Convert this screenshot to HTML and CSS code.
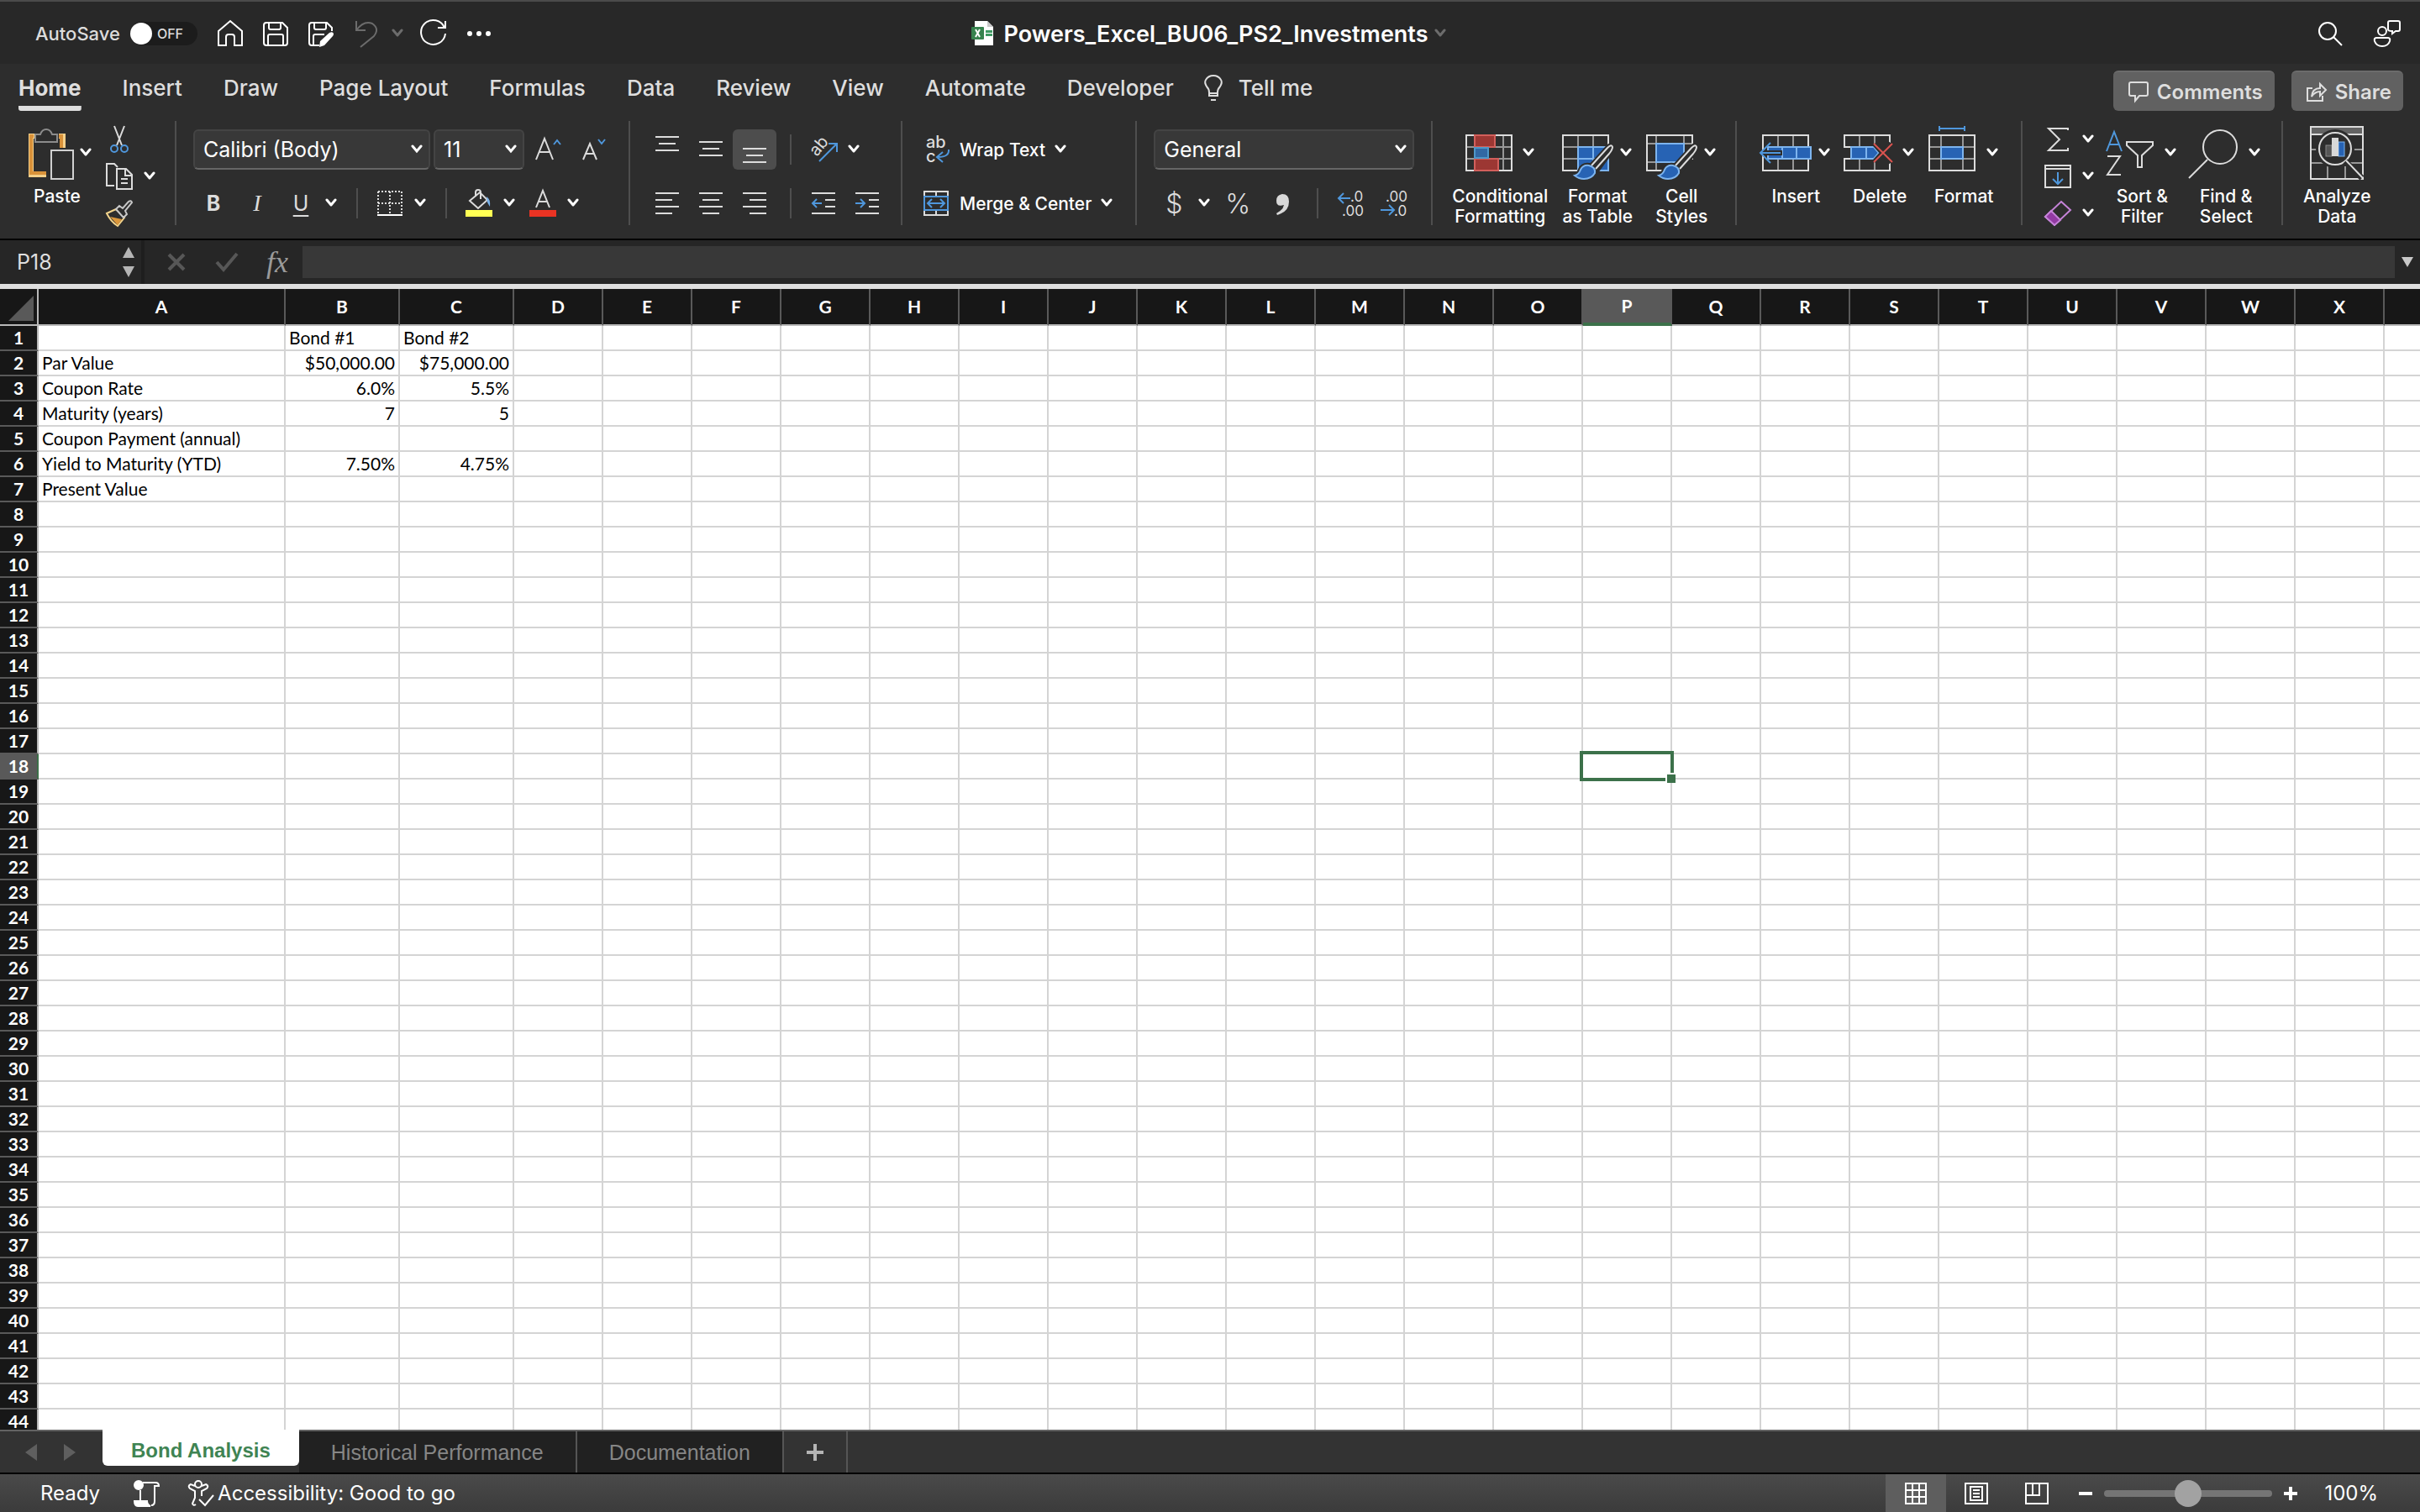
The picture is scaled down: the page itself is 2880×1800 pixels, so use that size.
FILE: index.html
```html
<!DOCTYPE html>
<html lang="en">
<head>
    <meta charset="UTF-8">
    <meta name="viewport" content="width=device-width, initial-scale=1.0">
    <title>Powers_Excel_BU06_PS2_Investments</title>
    <link rel="stylesheet" href="styles.css">
</head>
<body>

    <!-- Shared icon shapes -->
    <svg class="defs" aria-hidden="true">
        <symbol id="chev" viewBox="0 0 20 12"><path d="M5 2l5 6 5-6" fill="none" stroke="currentColor" stroke-width="3" stroke-linecap="round" stroke-linejoin="round"/></symbol>
        <symbol id="brush" viewBox="0 0 64 64">
            <path d="M37 47L56 26q5-5 6-1 0 3-4 8L44 52z" fill="#2d2d2d" stroke="#2d2d2d" stroke-width="6"/>
            <path d="M17 59q5-1 7-7 3-6 10-5 8 2 7 9-4 7-13 7-6 0-11-4z" fill="#2d2d2d" stroke="#2d2d2d" stroke-width="6"/>
            <path d="M37 47L56 26q5-5 6-1 0 3-4 8L42 51" fill="#2d2d2d" stroke="#dcdcdc" stroke-width="2"/>
            <path d="M17 59q5-1 7-7 3-6 10-5 8 2 7 9-4 7-13 7-6 0-11-4z" fill="#2763b4" stroke="#7db4ee" stroke-width="2"/>
        </symbol>
    </svg>

    <!-- Title bar -->
    <header class="title-bar">
        <div class="quick-access">
            <label class="autosave">AutoSave
                <span class="toggle"><input type="checkbox"><span>OFF</span></span>
            </label>
            <button aria-label="Home"><svg viewBox="0 0 32 32"><path d="M2 13L16 1l14 12v17h-9V20q0-3-3-3h-4q-3 0-3 3v10H2z"/></svg></button>
            <button aria-label="Save"><svg viewBox="0 0 32 32"><path d="M5 3h19l6 6v18q0 3-3 3H5q-3 0-3-3V6q0-3 3-3zM8 3v6q0 2 2 2h10q2 0 2-2V3M7 30V19q0-2 2-2h14q2 0 2 2v11"/></svg></button>
            <button aria-label="Save As"><svg viewBox="0 0 32 32"><path d="M14 30H5q-3 0-3-3V6q0-3 3-3h18l6 6v4M8 3v6q0 2 2 2h10q2 0 2-2V3M7 30V19q0-2 2-2h11"/><path class="solid" d="M15 25l11-10q4-2 5 1 0 2-1 3L20 30l-6 2z"/></svg></button>
            <button class="dim" aria-label="Undo"><svg viewBox="0 0 32 32"><path d="M4 1v11h11M4 12Q13 0 23 4q9 6 2 15L9 32"/></svg></button>
            <button class="dim narrow" aria-label="Undo options"><svg class="chev"><use href="#chev"/></svg></button>
            <button aria-label="Redo"><svg viewBox="0 0 32 32"><path d="M30 1v8h-9M29 9A14.500 14.500 0 1 0 30 16"/></svg></button>
            <button aria-label="More"><svg viewBox="0 0 32 32"><g class="solid"><circle cx="5" cy="16" r="3"/><circle cx="16" cy="16" r="3"/><circle cx="27" cy="16" r="3"/></g></svg></button>
        </div>
        <h1 class="doc-title">
            <svg viewBox="0 0 28 30"><path d="M4 0h15l7 7v22H4z" fill="#fff"/><path d="M19 0v7h7z" fill="#c8c8c8"/><path d="M17 11h8v3h-8zM17 15h8v3h-8z" fill="#3f9a63"/><rect x="0" y="7" width="15" height="15" rx="1" fill="#37834e"/><path d="M5 10l5 9M10 10l-5 9" stroke="#fff" stroke-width="2"/></svg>
            Powers_Excel_BU06_PS2_Investments
            <svg class="chev dim"><use href="#chev"/></svg>
        </h1>
        <div class="title-actions">
            <button aria-label="Search"><svg viewBox="0 0 32 32"><circle cx="13" cy="13" r="10"/><path d="M20 20l10 10"/></svg></button>
            <button aria-label="Collaborate"><svg viewBox="0 0 32 32"><circle cx="10" cy="13" r="5"/><path d="M3 21h14q3 0 2 4-2 6-9 6t-9-6q-1-4 2-4zM19 1h10q2 0 2 2v8q0 2-2 2h-3l-4 3v-3q-5 0-5-2V3q0-2 2-2z"/></svg></button>
        </div>
    </header>

    <!-- Ribbon tabs -->
    <nav class="ribbon-tabs">
        <a href="#" class="active">Home</a>
        <a href="#">Insert</a>
        <a href="#">Draw</a>
        <a href="#">Page Layout</a>
        <a href="#">Formulas</a>
        <a href="#">Data</a>
        <a href="#">Review</a>
        <a href="#">View</a>
        <a href="#">Automate</a>
        <a href="#">Developer</a>
        <a href="#" class="tell-me"><svg viewBox="0 0 24 32"><path d="M7 21q0-4-3-7Q1 9 3 6q3-5 9-5t9 5q2 3-1 8-3 3-3 7v4H7zM7 22h10M9 30h6" fill="none" stroke="currentColor" stroke-width="2"/></svg>Tell me</a>
        <div class="share-buttons">
            <button><svg viewBox="0 0 24 26"><path d="M3 2h18q2 0 2 2v12q0 2-2 2h-8l-5 6v-6H3q-2 0-2-2V4q0-2 2-2z"/></svg>Comments</button>
            <button><svg viewBox="0 0 24 26"><path d="M7 9H1v15h18v-6M6 19q1-10 10-10V4l7 7-7 7v-5q-6 0-10 6z"/></svg>Share</button>
        </div>
    </nav>

    <!-- Ribbon -->
    <section class="ribbon">
        <div class="group clipboard">
            <button class="big paste">
                <span class="face"><svg viewBox="0 0 64 64"><path d="M17 12h-4v46h18M46 12h5v14" fill="none" stroke="#f5d08a" stroke-width="6"/><path d="M16 12h-3v44h18M46 12h3v14" fill="none" stroke="#d9923a" stroke-width="4"/><path d="M18 17v-7h6q2-6 7-6t7 6h6v9H18z" fill="#2d2d2d" stroke="#8c8c8c" stroke-width="2"/><rect x="37" y="29" width="26" height="34" fill="#2d2d2d" stroke="#d0d0d0" stroke-width="2"/></svg><svg class="chev"><use href="#chev"/></svg></span>
                <span class="label">Paste</span>
            </button>
            <div class="stack">
                <div class="row"><button class="tool" aria-label="Cut"><svg viewBox="0 0 32 32"><path d="M10 0l9 23M22 0l-9 23" stroke="#dcdcdc" stroke-width="2"/><g fill="none" stroke="#4f97dc" stroke-width="2"><circle cx="10" cy="27" r="4"/><circle cx="22" cy="27" r="4"/></g></svg></button></div>
                <div class="row"><button class="tool" aria-label="Copy"><svg viewBox="0 0 32 32"><path d="M10 27H1V1h9l4 4M13 7h11l7 7v17H13zM23 7v8h8M18 19h8M18 24h8" fill="none" stroke="#dcdcdc" stroke-width="2"/></svg></button><button class="more" aria-label="Copy options"><svg class="chev"><use href="#chev"/></svg></button></div>
                <div class="row"><button class="tool" aria-label="Format Painter"><svg viewBox="0 0 32 32"><path d="M1 16l11-5 10 10-8 10q-8-5-13-15z" fill="#2d2d2d" stroke="#f3d48c" stroke-width="2"/><path d="M5 20l14 3-5 7z" fill="#dc973b"/><path d="M12 11l4-4 4 3 7-8q3-2 4 1l-8 10 2 4-4 4z" fill="#2d2d2d" stroke="#c8c8c8" stroke-width="2"/></svg></button></div>
            </div>
        </div>

        <div class="group font">
            <div class="row">
                <select class="font-name" aria-label="Font"><option>Calibri (Body)</option></select>
                <select class="font-size" aria-label="Font size"><option>11</option></select>
                <button class="tool" aria-label="Increase font size"><svg viewBox="0 0 32 32"><path d="M2 28L12 3l10 25M6 19h12" class="ln"/><path d="M23 10l4-5 4 5" class="bl"/></svg></button>
                <button class="tool" aria-label="Decrease font size"><svg viewBox="0 0 32 32"><path d="M6 28l8-19 8 19M9 21h10" class="ln"/><path d="M24 4l4 5 4-5" class="bl"/></svg></button>
            </div>
            <div class="row">
                <button class="tool bold">B</button>
                <button class="tool italic">I</button>
                <button class="tool underline">U</button>
                <button class="more" aria-label="Underline options"><svg class="chev"><use href="#chev"/></svg></button>
                <span class="sep"></span>
                <button class="tool" aria-label="Borders"><svg viewBox="0 0 32 32"><path d="M2 2h28M2 16h28M2 2v27M16 2v27M30 2v27" stroke="#dcdcdc" stroke-width="2" stroke-dasharray="2 2"/><path d="M1 30h30" stroke="#fff" stroke-width="2"/></svg></button>
                <button class="more" aria-label="Border options"><svg class="chev"><use href="#chev"/></svg></button>
                <span class="sep"></span>
                <button class="tool" aria-label="Fill color"><svg viewBox="0 0 32 32"><path d="M5 13L17 3l9 9-11 10zM12 8V3q0-3 3-3t3 3v8" class="ln"/><path d="M25 8q5 3 4 12l-3-5z" fill="#7ab2ea"/><rect y="24" width="32" height="8" fill="#ffff54"/></svg></button>
                <button class="more" aria-label="Fill options"><svg class="chev"><use href="#chev"/></svg></button>
                <button class="tool" aria-label="Font color"><svg viewBox="0 0 32 32"><path d="M8 21l8-20 8 20M11 14h10" class="ln"/><rect y="24" width="32" height="8" fill="#e93323"/></svg></button>
                <button class="more" aria-label="Font color options"><svg class="chev"><use href="#chev"/></svg></button>
            </div>
        </div>

        <div class="group alignment">
            <div class="row">
                <button class="tool" aria-label="Top align"><svg viewBox="0 0 28 32"><path d="M0 1h28M4 9h20M0 17h28" class="ln"/></svg></button>
                <button class="tool" aria-label="Middle align"><svg viewBox="0 0 28 32"><path d="M0 7h28M4 15h20M0 23h28" class="ln"/></svg></button>
                <button class="tool pressed" aria-label="Bottom align"><svg viewBox="0 0 28 32"><path d="M0 15h28M4 23h20M0 31h28" class="ln"/></svg></button>
                <span class="sep"></span>
                <button class="tool" aria-label="Orientation"><svg viewBox="0 0 28 32"><text x="-3" y="18" transform="rotate(-50 9 12)" class="glyph">ab</text><path d="M9 30L29 10M20 9h10v10" class="bl"/></svg></button>
                <button class="more" aria-label="Orientation options"><svg class="chev"><use href="#chev"/></svg></button>
            </div>
            <div class="row">
                <button class="tool" aria-label="Align left"><svg viewBox="0 0 28 32"><path d="M0 4h28M0 12h20M0 20h28M0 28h20" class="ln"/></svg></button>
                <button class="tool" aria-label="Center"><svg viewBox="0 0 28 32"><path d="M0 4h28M4 12h20M0 20h28M4 28h20" class="ln"/></svg></button>
                <button class="tool" aria-label="Align right"><svg viewBox="0 0 28 32"><path d="M0 4h28M8 12h20M0 20h28M8 28h20" class="ln"/></svg></button>
                <span class="sep"></span>
                <button class="tool" aria-label="Decrease indent"><svg viewBox="0 0 28 32"><path d="M0 4h28M16 12h12M16 20h12M0 28h28" class="ln"/><path d="M12 16H1M6 11l-5 5 5 5" class="bl"/></svg></button>
                <button class="tool" aria-label="Increase indent"><svg viewBox="0 0 28 32"><path d="M0 4h28M16 12h12M16 20h12M0 28h28" class="ln"/><path d="M0 16h11M6 11l5 5-5 5" class="bl"/></svg></button>
            </div>
        </div>

        <div class="group wrap">
            <div class="row"><button class="text-tool"><svg viewBox="0 0 32 32"><text x="4" y="14" class="glyph">ab</text><text x="4" y="31" class="glyph">c</text><path d="M31 16q1 9-13 9M24 19l-7 6 7 6" class="bl"/></svg>Wrap Text<svg class="chev"><use href="#chev"/></svg></button></div>
            <div class="row"><button class="text-tool"><svg viewBox="0 0 32 32"><path d="M2 2h28v28H2zM16 2v28" class="ln"/><path d="M2 8h28v16H2z" fill="#2d2d2d"/><path d="M2 8h28v16H2zM6 16h20M11 11l-5 5 5 5M21 11l5 5-5 5" class="bl"/></svg>Merge &amp; Center<svg class="chev"><use href="#chev"/></svg></button></div>
        </div>

        <div class="group number">
            <div class="row"><select class="number-format" aria-label="Number format"><option>General</option></select></div>
            <div class="row">
                <button class="tool symbol">$</button>
                <button class="more" aria-label="Currency options"><svg class="chev"><use href="#chev"/></svg></button>
                <button class="tool symbol">%</button>
                <button class="tool" aria-label="Comma style"><svg viewBox="0 0 32 32"><path d="M17 5q8 0 8 9 0 12-14 16l-1-2q8-4 9-10-9 3-9-5 0-7 7-8z" fill="#d8d8d8"/></svg></button>
                <span class="sep"></span>
                <button class="tool" aria-label="Increase decimal"><svg viewBox="0 0 32 32"><text x="16" y="14" class="digits">.0</text><text x="6" y="31" class="digits">.00</text><path d="M16 10H2M8 4l-6 6 6 6" class="bl"/></svg></button>
                <button class="tool" aria-label="Decrease decimal"><svg viewBox="0 0 32 32"><text x="6" y="14" class="digits">.00</text><text x="16" y="31" class="digits">.0</text><path d="M0 24h16M10 18l6 6-6 6" class="bl"/></svg></button>
            </div>
        </div>

        <div class="group styles">
            <button class="big wide">
                <span class="face"><svg viewBox="0 0 64 64"><path d="M4 25h54M4 39h54M14 11v42M48 11v42" class="gr"/><path d="M4 11h54v42H4z" class="ln"/><path d="M14 11h24v14H14zM14 39h28v14H14z" fill="#9c3733" stroke="#d25f5b" stroke-width="2"/><path d="M14 26h16v12H14z" fill="#3268a3" stroke="#4f97c8" stroke-width="2"/></svg><svg class="chev"><use href="#chev"/></svg></span>
                <span class="label">Conditional<br>Formatting</span>
            </button>
            <button class="big">
                <span class="face"><svg viewBox="0 0 64 64"><path d="M3 25h54M3 39h54M21 11v42M39 11v42" class="gr"/><path d="M3 11h54v42H3z" class="ln"/><path d="M21 25h36v28H21z" fill="#2763b4" stroke="#7db4ee" stroke-width="2"/><path d="M21 39h36M39 25v28" stroke="#7db4ee" stroke-width="2"/><use href="#brush"/></svg><svg class="chev"><use href="#chev"/></svg></span>
                <span class="label">Format<br>as Table</span>
            </button>
            <button class="big">
                <span class="face"><svg viewBox="0 0 64 64"><path d="M3 21h54M3 43h54M14 11v42M47 11v42" class="gr"/><path d="M3 11h54v42H3z" class="ln"/><path d="M14 21h33v22H14z" fill="#2763b4" stroke="#7db4ee" stroke-width="2"/><path d="M48 40h12v16H40z" fill="#2d2d2d"/><use href="#brush"/></svg><svg class="chev"><use href="#chev"/></svg></span>
                <span class="label">Cell<br>Styles</span>
            </button>
        </div>

        <div class="group cells">
            <button class="big">
                <span class="face"><svg viewBox="0 0 64 64"><path d="M23 11v42M41 11v42" class="gr"/><path d="M5 11h54v42H5z" class="ln"/><path d="M11 25h51v14H11z" fill="#2763b4" stroke="#7db4ee" stroke-width="2"/><path d="M28 25v14M45 25v14" stroke="#7db4ee" stroke-width="2"/><path d="M28 32H4" stroke="#2d2d2d" stroke-width="6"/><path d="M26 32H2M14 20L2 32l12 12" class="bl"/></svg><svg class="chev"><use href="#chev"/></svg></span>
                <span class="label">Insert</span>
            </button>
            <button class="big">
                <span class="face"><svg viewBox="0 0 64 64"><path d="M20 11v14M38 11v14M20 39v14M38 39v14" class="gr"/><path d="M10 25H2V11h54v14M10 39H2v14h54V39" class="ln"/><path d="M10 25h27l6 7-6 7H10z" fill="#2763b4" stroke="#7db4ee" stroke-width="2"/><path d="M28 25v14" stroke="#7db4ee" stroke-width="2"/><path d="M38 21l20 22M58 21L38 43" stroke="#2d2d2d" stroke-width="7"/><path d="M37 21l22 22M59 21L37 43" stroke="#d9534f" stroke-width="2"/></svg><svg class="chev"><use href="#chev"/></svg></span>
                <span class="label">Delete</span>
            </button>
            <button class="big">
                <span class="face"><svg viewBox="0 0 64 64"><path d="M3 25h54M3 39h54M17 11v42M43 11v42" class="gr"/><path d="M3 11h54v42H3z" class="ln"/><path d="M17 25h26v14H17z" fill="#2763b4" stroke="#7db4ee" stroke-width="2"/><path d="M15 3h30M15 0v6M45 0v6" class="bl"/></svg><svg class="chev"><use href="#chev"/></svg></span>
                <span class="label">Format</span>
            </button>
        </div>

        <div class="group editing">
            <div class="stack">
                <div class="row"><button class="tool" aria-label="AutoSum"><svg viewBox="0 0 32 32"><path d="M28 5V3H5l13 13L5 29h23v-3" class="ln"/></svg></button><button class="more" aria-label="AutoSum options"><svg class="chev"><use href="#chev"/></svg></button></div>
                <div class="row"><button class="tool" aria-label="Fill"><svg viewBox="0 0 32 32"><path d="M1 3h30v26H1zM1 7h30" class="ln"/><path d="M16 11v14M10 19l6 6 6-6" class="bl"/></svg></button><button class="more" aria-label="Fill options"><svg class="chev"><use href="#chev"/></svg></button></div>
                <div class="row"><button class="tool" aria-label="Clear"><svg viewBox="0 0 32 32"><path d="M20 2l11 10-19 18L1 20z" fill="#2d2d2d" stroke="#c583d8" stroke-width="2"/><path d="M1 20l7-7 11 11-7 6z" fill="#923aa3" stroke="#c583d8" stroke-width="2"/></svg></button><button class="more" aria-label="Clear options"><svg class="chev"><use href="#chev"/></svg></button></div>
            </div>
            <button class="big">
                <span class="face"><svg viewBox="0 0 64 64"><path d="M2 30L11 7l9 23M5 22h12" class="bl"/><path d="M3 36h15L3 58h16M26 19h31v4L44 35v14h-5V35L26 23z" class="ln"/></svg><svg class="chev"><use href="#chev"/></svg></span>
                <span class="label">Sort &amp;<br>Filter</span>
            </button>
            <button class="big">
                <span class="face"><svg viewBox="0 0 64 64"><circle cx="37" cy="25" r="20" class="ln"/><path d="M22 40L0 62" class="ln"/></svg><svg class="chev"><use href="#chev"/></svg></span>
                <span class="label">Find &amp;<br>Select</span>
            </button>
        </div>

        <div class="group analysis">
            <button class="big">
                <span class="face"><svg viewBox="0 0 64 64"><path d="M2 2h60v8H2z" fill="#636363"/><path d="M1 28h62M1 44h62M21 48v15M42 48v15" class="gr"/><path d="M1 1h62v62H1zM1 10h62" class="ln"/><circle cx="30" cy="27" r="23" fill="#2d2d2d"/><circle cx="30" cy="27" r="19" class="ln"/><path d="M42 42l20 20" stroke="#2d2d2d" stroke-width="7"/><path d="M43 41l20 21" class="ln"/><rect x="19" y="23" width="7" height="13" fill="#555" stroke="#888" stroke-width="1"/><rect x="34" y="19" width="7" height="17" fill="#2763b4" stroke="#7db4ee" stroke-width="1"/><rect x="26" y="14" width="8" height="22" fill="#d8d8d8"/></svg></span>
                <span class="label">Analyze<br>Data</span>
            </button>
        </div>
    </section>

    <!-- Formula bar -->
    <section class="formula-bar">
        <div class="name-box">
            <input type="text" value="P18" aria-label="Name box">
            <svg viewBox="0 0 14 40"><path d="M7 2l7 13H0zM7 38l7-13H0z" fill="#b5b5b5"/></svg>
        </div>
        <button aria-label="Cancel"><svg viewBox="0 0 28 28"><path d="M5 5l18 18M23 5L5 23"/></svg></button>
        <button aria-label="Enter"><svg viewBox="0 0 28 28"><path d="M2 14l8 9L26 4"/></svg></button>
        <button class="fx" aria-label="Insert function">fx</button>
        <input type="text" class="formula" aria-label="Formula">
        <button class="expand" aria-label="Expand formula bar"><svg viewBox="0 0 14 14"><path d="M0 1h14L7 13z"/></svg></button>
    </section>

    <!-- Worksheet, filled in by script.js -->
    <main class="sheet">
        <table id="grid"></table>
    </main>

    <!-- Sheet tabs -->
    <nav class="sheet-tabs">
        <button class="arrow" aria-label="Previous sheet"><svg viewBox="0 0 14 20"><path d="M14 0v20L0 10z"/></svg></button>
        <button class="arrow" aria-label="Next sheet"><svg viewBox="0 0 14 20"><path d="M0 0v20l14-10z"/></svg></button>
        <a href="#" class="sheet-tab active">Bond Analysis</a>
        <a href="#" class="sheet-tab">Historical Performance</a>
        <a href="#" class="sheet-tab">Documentation</a>
        <button class="add-sheet" aria-label="Add sheet"><svg viewBox="0 0 20 20"><path d="M10 0v20M0 10h20" stroke="#b4b4b4" stroke-width="4"/></svg></button>
    </nav>

    <!-- Status bar -->
    <footer class="status-bar">
        <span class="ready">Ready</span>
        <button class="macro" aria-label="Record macro"><svg viewBox="0 0 32 32"><path d="M11 3h15q4 0 4 4h-5v18q0 5-4 5M8 12v14" fill="none" stroke="#fff" stroke-width="2"/><path d="M1 25h15q0 4 4 6H5q-4 0-4-6z" fill="#fff"/><circle cx="6" cy="6" r="5" fill="#fff"/></svg></button>
        <button class="access"><svg viewBox="0 0 32 32"><circle cx="13" cy="5" r="4"/><path d="M9 7L4 5q-4 2-1 5l6 3v8l-3 7q1 3 4 1M17 7l5-2q4 2 1 5l-6 3v6M14 23l7 7L31 18"/></svg>Accessibility: Good to go</button>
        <div class="view-buttons">
            <button class="pressed" aria-label="Normal view"><svg viewBox="0 0 28 28"><path d="M2 2h24v24H2zM2 10h24M2 18h24M10 2v24M18 2v24"/></svg></button>
            <button aria-label="Page layout view"><svg viewBox="0 0 28 28"><path d="M1 2h26v24H1zM7 6h14v16H7zM10 10h8M10 14h8M10 18h8"/></svg></button>
            <button aria-label="Page break view"><svg viewBox="0 0 28 28"><path d="M1 2h26v24H1zM1 16h16V2M9 2v14"/></svg></button>
        </div>
        <button class="zoom-btn" aria-label="Zoom out"><svg viewBox="0 0 16 16"><path d="M0 8h16"/></svg></button>
        <input type="range" min="10" max="190" value="100" aria-label="Zoom">
        <button class="zoom-btn" aria-label="Zoom in"><svg viewBox="0 0 16 16"><path d="M0 8h16M8 0v16"/></svg></button>
        <span class="zoom-value">100%</span>
    </footer>

    <script src="script.js"></script>
</body>
</html>
```
FILE: styles.css
```css
* {
    box-sizing: border-box;
}
body {
    margin: 0;
    height: 100vh;
    display: flex;
    flex-direction: column;
    overflow: hidden;
    background: #2d2d2d;
    color: #fff;
    font-family: Inter, "Liberation Sans", sans-serif;
    font-size: 22px;
}
button, input, select {
    font: inherit;
    color: inherit;
    margin: 0;
    padding: 0;
    border: none;
    background: none;
}
button {
    display: flex;
    align-items: center;
    justify-content: center;
}
a {
    color: inherit;
    text-decoration: none;
}
svg {
    flex: none;
    overflow: visible;
}
.defs {
    display: none;
}
.chev {
    width: 20px;
    height: 12px;
}
.ln {
    fill: none;
    stroke: #dcdcdc;
    stroke-width: 2;
}
.gr {
    fill: none;
    stroke: #979797;
    stroke-width: 2;
}
.bl {
    fill: none;
    stroke: #4f97dc;
    stroke-width: 2;
}

/* Title bar */
.title-bar {
    display: grid;
    grid-template-columns: 1fr auto 1fr;
    align-items: center;
    height: 76px;
    padding: 2px 12px 0;
    background: #282828;
    border-top: 2px solid #4b4b4b;
}
.quick-access, .title-actions {
    display: flex;
    align-items: center;
}
.quick-access button, .title-actions button {
    width: 54px;
    height: 32px;
}
.quick-access svg, .title-actions svg {
    width: 32px;
    height: 32px;
    fill: none;
    stroke: currentColor;
    stroke-width: 2;
}
.quick-access .narrow {
    width: 20px;
}
.quick-access .narrow + button {
    margin-left: 6px;
}
.quick-access .chev {
    width: 20px;
    height: 12px;
}
.quick-access .solid {
    fill: currentColor;
    stroke: none;
}
.dim {
    color: #6c6c6c;
}
.autosave {
    display: flex;
    align-items: center;
    gap: 12px;
    margin: 0 12px 0 30px;
    color: #dcdcdc;
    font-weight: 500;
}
.toggle {
    display: flex;
    align-items: center;
    gap: 6px;
    width: 80px;
    height: 28px;
    border-radius: 14px;
    background: #1c1c1c;
    font-size: 16px;
}
.toggle input {
    appearance: none;
    width: 26px;
    height: 26px;
    border-radius: 50%;
    background: #fff;
}
.doc-title {
    display: flex;
    align-items: center;
    gap: 10px;
    margin: 0;
    font-size: 27px;
    font-weight: 600;
}
.doc-title svg {
    width: 28px;
    height: 30px;
}
.doc-title .chev {
    width: 20px;
    height: 12px;
    margin-left: -6px;
}
.title-actions {
    justify-content: flex-end;
    gap: 14px;
}

/* Ribbon tabs */
.ribbon-tabs {
    display: flex;
    align-items: flex-start;
    gap: 49px;
    height: 68px;
    padding: 8px 20px 0 22px;
    color: #dedede;
    font-size: 26px;
    font-weight: 500;
}
.ribbon-tabs a {
    height: 48px;
    line-height: 42px;
}
.ribbon-tabs .active {
    font-weight: 700;
    background: linear-gradient(#dedede, #dedede) bottom / 100% 6px no-repeat;
    border-radius: 3px;
}
.ribbon-tabs .tell-me {
    display: flex;
    align-items: center;
    gap: 18px;
    margin-left: -14px;
    height: 42px;
}
.tell-me svg {
    width: 24px;
    height: 32px;
}
.share-buttons {
    display: flex;
    gap: 20px;
    margin-left: auto;
}
.share-buttons button {
    gap: 10px;
    height: 48px;
    padding: 0 14px 0 18px;
    border-radius: 6px;
    border-top: 2px solid #6c6c6c;
    background: #616161;
    font-size: 24px;
    font-weight: 600;
}
.share-buttons svg {
    width: 24px;
    height: 26px;
    fill: none;
    stroke: currentColor;
    stroke-width: 2;
}

/* Ribbon */
.ribbon {
    display: flex;
    height: 142px;
    padding-bottom: 16px;
    border-bottom: 2px solid #000;
}
.group {
    height: 124px;
    padding: 0 18px;
}
.group + .group {
    border-left: 2px solid #4e4e4e;
}
.group > .row {
    height: 48px;
    margin-top: 10px;
}
.group > .row + .row {
    margin-top: 16px;
}
.clipboard, .styles, .cells, .editing, .analysis {
    display: flex;
}
.clipboard {
    padding: 0 16px 0 20px;
}
.alignment {
    padding-right: 14px;
}
.wrap {
    padding: 0 24px 0 14px;
}
.styles {
    padding: 0 14px;
}
.cells {
    padding-left: 20px;
}
.editing {
    padding: 0 16px;
}
.analysis {
    padding: 0 14px;
}
.row {
    display: flex;
    align-items: center;
}
.stack .row {
    height: 44px;
}
.tool {
    width: 52px;
    height: 48px;
    color: #dcdcdc;
}
.stack .tool {
    height: 44px;
}
.tool svg {
    width: 32px;
    height: 32px;
}
.alignment .tool svg {
    width: 28px;
}
.more {
    width: 20px;
    height: 44px;
    margin-right: 4px;
}
.sep {
    width: 2px;
    height: 36px;
    margin: 0 12px 0 16px;
    background: #4e4e4e;
}
.pressed {
    background: #4d4d4d;
    border-radius: 6px;
}
.bold {
    font-size: 25px;
    font-weight: 700;
}
.italic {
    font-family: "Liberation Serif", serif;
    font-size: 28px;
    font-style: italic;
}
.underline {
    font-size: 25px;
    text-decoration: underline;
    text-underline-offset: 5px;
}
.symbol {
    font-size: 32px;
    font-weight: 300;
}
.glyph {
    font-size: 20px;
    fill: #dcdcdc;
}
.digits {
    font-size: 17px;
    fill: #dcdcdc;
}
select {
    appearance: none;
    height: 48px;
    margin: 0 2px;
    padding: 0 10px;
    border: 2px solid #444;
    border-bottom-color: #666;
    border-radius: 6px;
    background: #383838 url("data:image/svg+xml,%3Csvg xmlns='http://www.w3.org/2000/svg' width='20' height='12'%3E%3Cpath d='M5 2l5 6 5-6' fill='none' stroke='white' stroke-width='3' stroke-linecap='round'/%3E%3C/svg%3E") no-repeat right 4px center;
    font-size: 25px;
}
.font-name {
    width: 282px;
}
.font-size {
    width: 108px;
}
.number-format {
    width: 310px;
}
.text-tool {
    gap: 12px;
    padding-left: 10px;
    font-size: 21px;
    font-weight: 500;
}
.text-tool svg {
    width: 32px;
    height: 32px;
}
.text-tool .chev {
    width: 20px;
    height: 12px;
    margin-left: -4px;
}
.big {
    flex-direction: column;
    justify-content: flex-start;
    width: 100px;
    padding-top: 6px;
}
.big.wide {
    width: 132px;
}
.big.paste {
    width: 96px;
}
.face {
    display: flex;
    align-items: center;
    gap: 4px;
    margin-bottom: 8px;
}
.face > svg:first-child {
    width: 64px;
    height: 64px;
}
.label {
    font-size: 21px;
    font-weight: 500;
    line-height: 24px;
    text-align: center;
}

/* Formula bar */
.formula-bar {
    display: flex;
    align-items: center;
    height: 52px;
    background: #262626;
}
.formula-bar button {
    width: 60px;
    height: 52px;
}
.formula-bar svg {
    width: 28px;
    height: 28px;
    fill: none;
    stroke: #575757;
    stroke-width: 4;
}
.name-box {
    display: flex;
    align-items: center;
    width: 172px;
    height: 52px;
    margin-right: 8px;
    padding: 0 8px 0 20px;
    border-right: 4px solid #1e1e1e;
}
.name-box input {
    flex: 1;
    min-width: 0;
    color: #dedede;
    font-size: 25px;
}
.formula-bar .name-box svg {
    width: 14px;
    height: 40px;
    stroke: none;
}
.formula-bar .fx {
    color: #9a9a9a;
    font-family: "Liberation Serif", serif;
    font-size: 36px;
    font-style: italic;
}
.formula {
    flex: 1;
    height: 38px;
    background: #383838;
}
.formula-bar .expand {
    width: 30px;
}
.formula-bar .expand svg {
    width: 14px;
    height: 14px;
    fill: #c8c8c8;
    stroke: none;
}

/* Worksheet */
.sheet {
    flex: 1;
    min-height: 0;
    overflow: hidden;
    border-top: 6px solid #dedede;
    background: #fff;
    color: #000;
}
table {
    table-layout: fixed;
    width: 0;
    border-collapse: separate;
    border-spacing: 0;
    font-family: Lato, "Liberation Sans", sans-serif;
    font-size: 21px;
}
.col-head {
    width: 46px;
}
.col-a {
    width: 294px;
}
.col-b {
    width: 136px;
}
.col-n {
    width: 106px;
}
th, td {
    height: 30px;
    padding: 0 4px;
    border-right: 2px solid #d4d4d4;
    border-bottom: 2px solid #d4d4d4;
    line-height: 28px;
    white-space: nowrap;
}
th {
    background: #171717;
    color: #fff;
    font-weight: 700;
    border-color: #595959;
}
thead th {
    height: 44px;
    border-bottom-color: #b9b9b9;
}
tbody th, .corner {
    padding: 0;
    border-right-color: #b9b9b9;
}
.corner svg {
    display: block;
    width: 30px;
    height: 30px;
    margin: 4px 0 0 10px;
}
th.selected {
    background: #595959;
}
thead th.selected {
    border-bottom: 4px solid #3c714a;
    border-right-color: #595959;
}
tbody th.selected {
    border-right-color: #3c714a;
}
.num {
    text-align: right;
}
.cursor {
    position: relative;
}
.cursor::before {
    content: "";
    position: absolute;
    inset: -4px;
    border: 4px solid #3c714a;
}
.cursor::after {
    content: "";
    position: absolute;
    right: -6px;
    bottom: -6px;
    width: 10px;
    height: 10px;
    background: #3c714a;
    box-shadow: -1px -1px 0 1px #fff;
}

/* Sheet tabs */
.sheet-tabs {
    display: flex;
    height: 53px;
    padding-left: 14px;
    background: #333;
    border-top: 2px solid #636363;
    border-bottom: 2px solid #000;
    font-family: "Liberation Sans", sans-serif;
    font-size: 25px;
}
.arrow {
    width: 46px;
}
.arrow svg {
    width: 14px;
    height: 20px;
    fill: #5f5f5f;
}
.sheet-tab {
    padding: 0 38px;
    line-height: 50px;
    background: #212121;
    border-right: 2px solid #555;
    color: #868686;
}
.sheet-tab.active {
    height: 43px;
    margin: -2px 0 0 16px;
    padding: 0 34px;
    border-right: none;
    border-radius: 0 0 6px 6px;
    background: #fff;
    color: #3f8453;
    font-size: 24px;
    font-weight: 700;
}
.add-sheet {
    width: 76px;
    border-right: 2px solid #555;
}
.add-sheet svg {
    width: 20px;
    height: 20px;
}

/* Status bar */
.status-bar {
    display: flex;
    align-items: center;
    height: 45px;
    padding: 0 50px 0 48px;
    background: linear-gradient(#4a4a4a, #3b3b3b);
    font-size: 24px;
}
.status-bar svg {
    width: 28px;
    height: 28px;
    fill: none;
    stroke: #fff;
    stroke-width: 2;
}
.status-bar .macro {
    margin: 0 32px 0 40px;
}
.status-bar .macro svg, .access svg {
    width: 32px;
    height: 32px;
}
.access {
    gap: 4px;
}
.view-buttons {
    display: flex;
    align-self: stretch;
    margin-left: auto;
}
.view-buttons button {
    width: 72px;
}
.view-buttons .pressed {
    border-radius: 0;
    background: #5e5e5e;
}
.zoom-btn {
    width: 44px;
}
.status-bar .zoom-btn svg {
    width: 16px;
    height: 16px;
    stroke-width: 4;
}
input[type="range"] {
    appearance: none;
    width: 200px;
    height: 8px;
    border-radius: 4px;
    background: #757575;
}
input[type="range"]::-webkit-slider-thumb {
    appearance: none;
    width: 32px;
    height: 32px;
    border-radius: 50%;
    background: #a2a2a2;
}
.zoom-value {
    margin-left: 18px;
}
```
FILE: script.js
```js
const ROWS = 44;
const LETTERS = "ABCDEFGHIJKLMNOPQRSTUVWXY".split("");
const SELECTED = { col: "P", row: 18 };

const data = {
    B1: "Bond #1", C1: "Bond #2",
    A2: "Par Value", B2: "$50,000.00", C2: "$75,000.00",
    A3: "Coupon Rate", B3: "6.0%", C3: "5.5%",
    A4: "Maturity (years)", B4: "7", C4: "5",
    A5: "Coupon Payment (annual)",
    A6: "Yield to Maturity (YTD)", B6: "7.50%", C6: "4.75%",
    A7: "Present Value"
};

function colClass(letter) {
    if (letter === "A") return "col-a";
    if (letter === "B" || letter === "C") return "col-b";
    return "col-n";
}

let html = "<colgroup><col class='col-head'>";
LETTERS.forEach(l => html += `<col class="${colClass(l)}">`);
html += "</colgroup><thead><tr><th class='corner'><svg viewBox='0 0 30 30'><path d='M30 0v30H0z' fill='#595959'/></svg></th>";
LETTERS.forEach(l => html += `<th scope="col"${l === SELECTED.col ? " class='selected'" : ""}>${l}</th>`);
html += "</tr></thead><tbody>";

for (let r = 1; r <= ROWS; r++) {
    html += `<tr><th scope="row"${r === SELECTED.row ? " class='selected'" : ""}>${r}</th>`;
    LETTERS.forEach(l => {
        const value = data[l + r] || "";
        const classes = [];
        if (/^[$\d]/.test(value)) classes.push("num");
        if (l === SELECTED.col && r === SELECTED.row) classes.push("cursor");
        html += `<td class="${classes.join(" ")}">${value}</td>`;
    });
    html += "</tr>";
}

document.getElementById("grid").innerHTML = html + "</tbody>";
```
